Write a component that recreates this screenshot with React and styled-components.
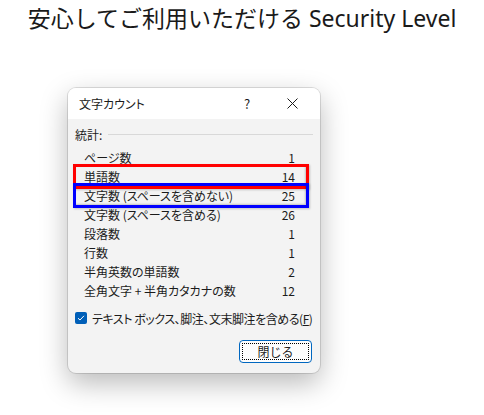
import React from 'react';
import styled, { createGlobalStyle } from 'styled-components';

const GlobalStyle = createGlobalStyle`
  html, body {
    margin: 0;
    background: #ffffff;
  }
`;

const Page = styled.div`
  width: 484px;
  height: 415px;
  padding-top: 3px;
  box-sizing: border-box;
  font-family: "Noto Sans CJK JP", "Noto Sans", sans-serif;
`;

const Heading = styled.h1`
  margin: 0;
  text-align: center;
  font-family: "Noto Sans", "Noto Sans CJK JP", sans-serif;
  font-weight: 400;
  font-size: 23px;
  line-height: 30px;
  color: #1a1a1a;
  white-space: nowrap;
`;

const Dialog = styled.div`
  margin: 55px 0 0 68px;
  width: 252px;
  height: 285px;
  border-radius: 8px;
  background: #f3f3f3;
  box-shadow: 0 10px 28px rgba(0, 0, 0, 0.28), 0 0 0 1px rgba(0, 0, 0, 0.12);
  overflow: hidden;
  display: flex;
  flex-direction: column;
  font-size: 12px;
  color: #1b1b1b;
  font-feature-settings: "palt";
`;

const TitleBar = styled.div`
  height: 31px;
  background: #ffffff;
  display: flex;
  align-items: center;
  padding-left: 11px;
`;

const Title = styled.span`
  flex: 1;
  line-height: 16px;
`;

const TitleButton = styled.span`
  width: ${p => p.w}px;
  display: flex;
  justify-content: center;
  align-items: center;
  font-size: 13px;
`;

const Body = styled.div`
  flex: 1;
  padding: 7px 7px 10px 7px;
  display: flex;
  flex-direction: column;
`;

const GroupHeader = styled.div`
  display: flex;
  align-items: center;
  height: 16px;
  gap: 6px;
`;

const Rule = styled.div`
  flex: 1;
  height: 1px;
  background: #d8d8d8;
`;

const List = styled.div`
  margin: 6px 18px 0 9px;
  display: flex;
  flex-direction: column;
`;

const Row = styled.div`
  position: relative;
  height: 19px;
  display: flex;
  align-items: center;
  justify-content: space-between;
  &::after {
    content: ${p => (p.mark ? '""' : 'none')};
    position: absolute;
    top: -3px;
    bottom: -3px;
    left: -11px;
    right: -14px;
    border: 3px solid ${p => p.mark};
    box-shadow: inset -1px -1px 2px rgba(0, 0, 0, 0.2), 1px 1px 2px rgba(0, 0, 0, 0.2);
  }
`;

const Check = styled.div`
  margin-top: 10px;
  height: 16px;
  display: flex;
  align-items: center;
  gap: 5px;
  white-space: nowrap;
`;

const Box = styled.span`
  flex: none;
  width: 12px;
  height: 12px;
  border-radius: 2px;
  background: #005fb8;
  display: flex;
  align-items: center;
  justify-content: center;
`;

const CheckLabel = styled.span`
  letter-spacing: -0.45px;
`;

const Footer = styled.div`
  margin-top: 14px;
  display: flex;
  justify-content: flex-end;
  padding-right: 1px;
`;

const Button = styled.button`
  width: 73px;
  height: 23px;
  padding: 2px;
  border: 1px solid #0067c0;
  border-radius: 4px;
  background: #fdfdfd;
  font-family: inherit;
  font-size: 12px;
  color: #1b1b1b;
  box-sizing: border-box;
`;

const Focus = styled.span`
  display: flex;
  height: 100%;
  align-items: center;
  justify-content: center;
  border: 1px dotted #000;
  box-sizing: border-box;
`;

const stats = [
  ['ページ数', '1'],
  ['単語数', '14', '#ff0000'],
  ['文字数 (スペースを含めない)', '25', '#0000ff'],
  ['文字数 (スペースを含める)', '26'],
  ['段落数', '1'],
  ['行数', '1'],
  ['半角英数の単語数', '2'],
  ['全角文字 + 半角カタカナの数', '12'],
];

export default function App() {
  return (
    <Page>
      <GlobalStyle />
      <Heading>安心してご利用いただける Security Level</Heading>
      <Dialog>
        <TitleBar>
          <Title>文字カウント</Title>
          <TitleButton w={34}>?</TitleButton>
          <TitleButton w={56}>
            <svg width="11" height="11" viewBox="0 0 11 11">
              <path d="M0.5 0.5 L10.5 10.5 M10.5 0.5 L0.5 10.5" stroke="#1b1b1b" strokeWidth="1" />
            </svg>
          </TitleButton>
        </TitleBar>
        <Body>
          <GroupHeader>
            <span>統計:</span>
            <Rule />
          </GroupHeader>
          <List>
            {stats.map(([label, value, mark]) => (
              <Row key={label} mark={mark}>
                <span>{label}</span>
                <span>{value}</span>
              </Row>
            ))}
          </List>
          <Check>
            <Box>
              <svg width="8" height="8" viewBox="0 0 8 8">
                <path d="M1 4.2 L3 6 L7 1.8" fill="none" stroke="#fff" strokeWidth="1" />
              </svg>
            </Box>
            <CheckLabel>
              テキスト ボックス、脚注、文末脚注を含める(<u>F</u>)
            </CheckLabel>
          </Check>
          <Footer>
            <Button>
              <Focus>閉じる</Focus>
            </Button>
          </Footer>
        </Body>
      </Dialog>
    </Page>
  );
}
